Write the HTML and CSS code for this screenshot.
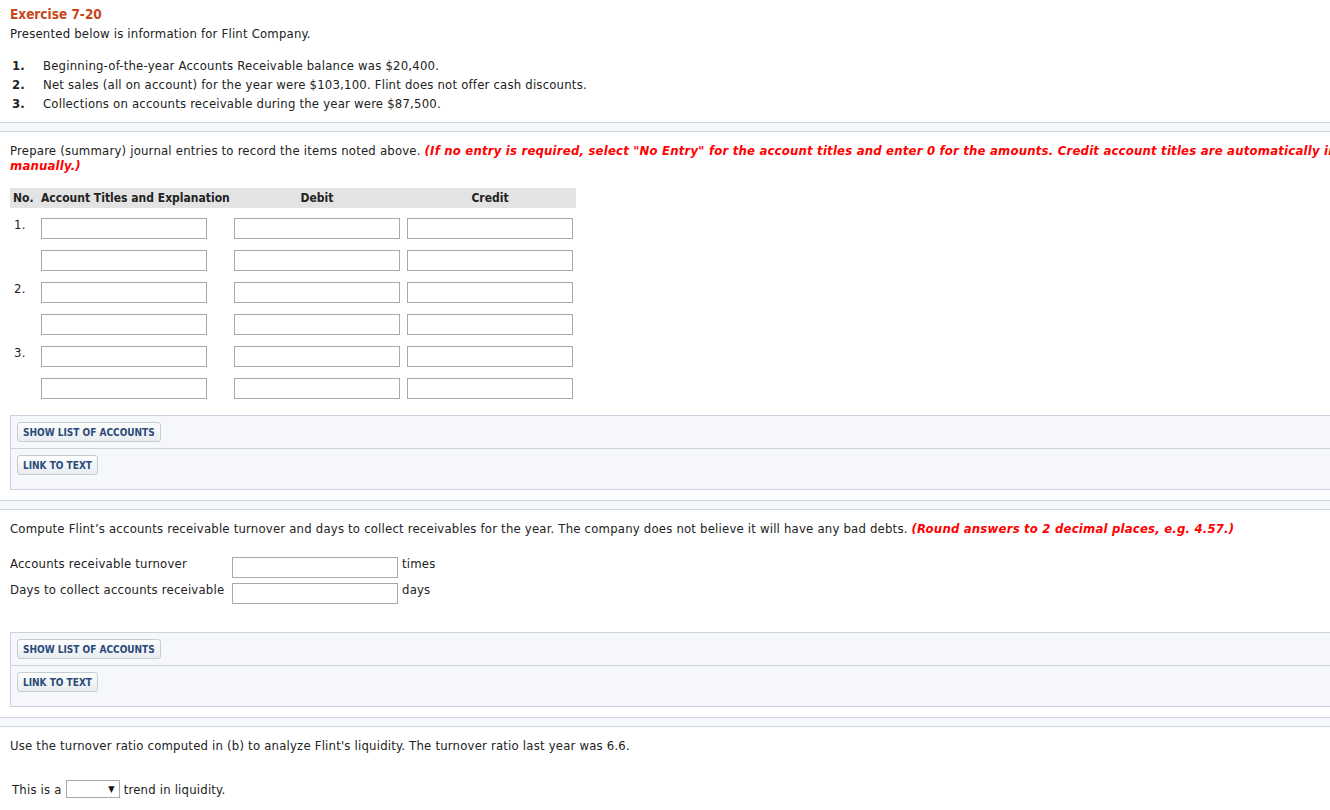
FILE: index.html
```html
<!DOCTYPE html>
<html lang="en">
<head>
    <meta charset="UTF-8">
    <title>Exercise 7-20</title>
    <link rel="stylesheet" href="styles.css">
</head>
<body>
    <div class="page">
        <div class="intro">
            <h1 class="ex-title">Exercise 7-20</h1>
            <p>Presented below is information for Flint Company.</p>
            <ol class="facts">
                <li><span class="num">1.</span>Beginning-of-the-year Accounts Receivable balance was $20,400.</li>
                <li><span class="num">2.</span>Net sales (all on account) for the year were $103,100. Flint does not offer cash discounts.</li>
                <li><span class="num">3.</span>Collections on accounts receivable during the year were $87,500.</li>
            </ol>
        </div>

        <div class="part-sep"></div>

        <!-- part (a) -->
        <div class="part">
            <p class="instr">Prepare (summary) journal entries to record the items noted above. <em class="hint">(If no entry is required, select "No Entry" for the account titles and enter 0 for the amounts. Credit account titles are automatically indented when amount is entered. Do not indent manually.)</em></p>

            <div class="journal">
                <div class="jhead">
                    <div class="c-no">No.</div>
                    <div class="c-acct">Account Titles and Explanation</div>
                    <div class="c-amt">Debit</div>
                    <div class="c-amt">Credit</div>
                </div>
                <div class="jrow">
                    <div class="c-no">1.</div>
                    <div class="c-acct"><input type="text"></div>
                    <div class="c-amt"><input type="text"></div>
                    <div class="c-amt"><input type="text"></div>
                </div>
                <div class="jrow">
                    <div class="c-no"></div>
                    <div class="c-acct"><input type="text"></div>
                    <div class="c-amt"><input type="text"></div>
                    <div class="c-amt"><input type="text"></div>
                </div>
                <div class="jrow">
                    <div class="c-no">2.</div>
                    <div class="c-acct"><input type="text"></div>
                    <div class="c-amt"><input type="text"></div>
                    <div class="c-amt"><input type="text"></div>
                </div>
                <div class="jrow">
                    <div class="c-no"></div>
                    <div class="c-acct"><input type="text"></div>
                    <div class="c-amt"><input type="text"></div>
                    <div class="c-amt"><input type="text"></div>
                </div>
                <div class="jrow">
                    <div class="c-no">3.</div>
                    <div class="c-acct"><input type="text"></div>
                    <div class="c-amt"><input type="text"></div>
                    <div class="c-amt"><input type="text"></div>
                </div>
                <div class="jrow">
                    <div class="c-no"></div>
                    <div class="c-acct"><input type="text"></div>
                    <div class="c-amt"><input type="text"></div>
                    <div class="c-amt"><input type="text"></div>
                </div>
            </div>

            <div class="tools">
                <div class="tool-row"><button class="tool-btn">SHOW LIST OF ACCOUNTS</button></div>
                <div class="tool-row last"><button class="tool-btn">LINK TO TEXT</button></div>
            </div>
        </div>

        <div class="part-sep"></div>

        <!-- part (b) -->
        <div class="part">
            <p class="instr">Compute Flint’s accounts receivable turnover and days to collect receivables for the year. The company does not believe it will have any bad debts. <em class="hint">(Round answers to 2 decimal places, e.g. 4.57.)</em></p>

            <div class="calc">
                <div class="calc-row">
                    <span class="calc-label">Accounts receivable turnover</span>
                    <input type="text">
                    <span class="unit">times</span>
                </div>
                <div class="calc-row">
                    <span class="calc-label">Days to collect accounts receivable</span>
                    <input type="text">
                    <span class="unit">days</span>
                </div>
            </div>

            <div class="tools">
                <div class="tool-row"><button class="tool-btn">SHOW LIST OF ACCOUNTS</button></div>
                <div class="tool-row last"><button class="tool-btn">LINK TO TEXT</button></div>
            </div>
        </div>

        <div class="part-sep"></div>

        <!-- part (c) -->
        <div class="part">
            <p class="instr">Use the turnover ratio computed in (b) to analyze Flint's liquidity. The turnover ratio last year was 6.6.</p>
            <p class="trend">This is a <span class="pick"><span class="arrow">▼</span></span> trend in liquidity.</p>
        </div>
    </div>
</body>
</html>
```

FILE: styles.css
```css
* {
    margin: 0;
    padding: 0;
    box-sizing: border-box;
}

html, body {
    overflow: hidden;
}

body {
    font-family: "DejaVu Sans Condensed", "DejaVu Sans", sans-serif;
    font-size: 13px;
    letter-spacing: 0.2px;
    color: #222;
    background: white;
}

/* the exercise frame is wider than the window, like the original */
.page {
    width: 1700px;
}

.intro {
    padding: 5px 10px 9px;
}

.ex-title {
    color: #c9461a;
    font-size: 13.5px;
    letter-spacing: 0;
    font-weight: bold;
    line-height: 18px;
    margin-bottom: 1px;
}

.intro p {
    line-height: 20px;
}

.facts {
    list-style: none;
    margin-top: 12px;
}

.facts li {
    line-height: 19px;
}

.facts .num {
    display: inline-block;
    width: 33px;
    padding-left: 2px;
    font-weight: bold;
}

.part-sep {
    height: 10px;
    background: #f5f8fb;
    border-top: 1px solid #cdd4de;
    border-bottom: 1px solid #cdd4de;
}

.part {
    padding: 10px 10px 10px;
}

.instr {
    line-height: 15px;
    margin-top: 1px;
}

.hint {
    color: #f00;
    font-weight: bold;
}

/* journal table */
.journal {
    margin-top: 15px;
    width: 566px;
}

.jhead,
.jrow {
    display: grid;
    grid-template-columns: 31px 193px 173px 169px;
}

.jhead {
    background: #e3e3e3;
    font-size: 12px;
    letter-spacing: 0;
    font-weight: bold;
    height: 20px;
    line-height: 20px;
    margin-bottom: 10px;
    white-space: nowrap;
}

.jhead .c-no {
    padding-left: 3px;
}

.jhead .c-amt {
    width: 166px;
    text-align: center;
}

.jrow {
    height: 32px;
}

.jrow .c-no {
    padding-left: 4px;
    line-height: 13px;
}

input[type="text"] {
    width: 166px;
    height: 21px;
    border: 1px solid #a9a9a9;
    background: white;
    font: inherit;
}

/* buttons box */
.tools {
    margin-top: 5px;
    background: #f5f7fa;
    border: 1px solid #c9d3df;
    border-right: none;
}

.tool-row {
    padding: 6px 6px 6px;
    border-bottom: 1px solid #c9d3df;
}

.tool-row.last {
    border-bottom: none;
    padding-bottom: 14px;
}

.tool-btn {
    font-family: "DejaVu Sans Condensed", "DejaVu Sans", sans-serif;
    font-size: 10px;
    font-weight: bold;
    letter-spacing: 0;
    color: #2b4a78;
    height: 20px;
    padding: 0 5px;
    background: linear-gradient(#fdfdfd, #e9edf1);
    border: 1px solid #c6ccd4;
    border-radius: 3px;
}

/* part b */
.calc {
    margin-top: 21px;
    margin-bottom: 23px;
}

.calc-row {
    display: flex;
    align-items: flex-start;
    height: 26px;
}

.calc-label {
    width: 222px;
    line-height: 12px;
    padding-top: 1px;
}

.unit {
    padding-left: 4px;
    line-height: 12px;
    padding-top: 1px;
}

/* part c */
.trend {
    margin-top: 27px;
    padding-left: 2px;
    display: flex;
    align-items: center;
}

.pick {
    display: inline-flex;
    justify-content: flex-end;
    align-items: center;
    width: 54px;
    height: 18px;
    margin: 0 4px;
    border: 1px solid #a9a9a9;
    background: white;
}

.arrow {
    font-size: 9px;
    padding-right: 4px;
    color: #111;
}
```
